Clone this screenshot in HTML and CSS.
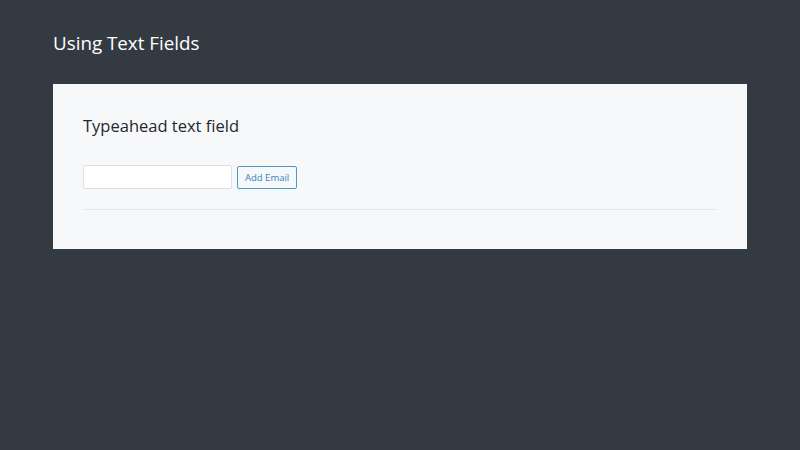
FILE: index.html
```html
<!DOCTYPE html>
<html>
<head>
<meta charset="utf-8">
<link rel="stylesheet" href="styles.css">
</head>
<body>
<div class="page">
  <h1 class="title">Using Text Fields</h1>
  <div class="card">
    <h2 class="card-title">Typeahead text field</h2>
    <div class="row">
      <input class="field" type="text">
      <button class="btn">Add Email</button>
    </div>
    <hr class="rule">
  </div>
</div>
</body>
</html>
```
FILE: styles.css
```css
html, body {
  margin: 0;
  padding: 0;
  background: #343a42;
  font-family: "Open Sans", "Noto Sans", sans-serif;
}
.page {
  padding: 29px 53px 0 53px;
}
.title {
  margin: 0;
  font-size: 18.8px;
  font-weight: 400;
  color: #ffffff;
  line-height: 28px;
  height: 55px;
}
.card {
  background: #f7f8fa;
  padding: 30px 30px 39px 30px;
}
.card-title {
  margin: 0;
  font-size: 16.5px;
  font-weight: 400;
  color: #24282c;
  line-height: 24px;
  height: 51px;
}
.row {
  display: flex;
  align-items: center;
  gap: 5px;
}
.field {
  box-sizing: border-box;
  width: 149px;
  height: 24px;
  border: 1px solid #dcdfe3;
  border-radius: 2px;
  background: #ffffff;
  margin: 0;
}
.btn {
  box-sizing: border-box;
  height: 23px;
  padding: 0 7px;
  border: 1px solid #4d9bc4;
  border-radius: 2px;
  background: #f7f8fa;
  color: #2f86c0;
  font-family: "Open Sans", "Noto Sans", sans-serif;
  font-size: 9.5px;
  margin: 0;
}
.rule {
  margin: 20px 0 0 0;
  border: 0;
  border-top: 1px solid #e2e5e9;
  height: 0;
}
```
